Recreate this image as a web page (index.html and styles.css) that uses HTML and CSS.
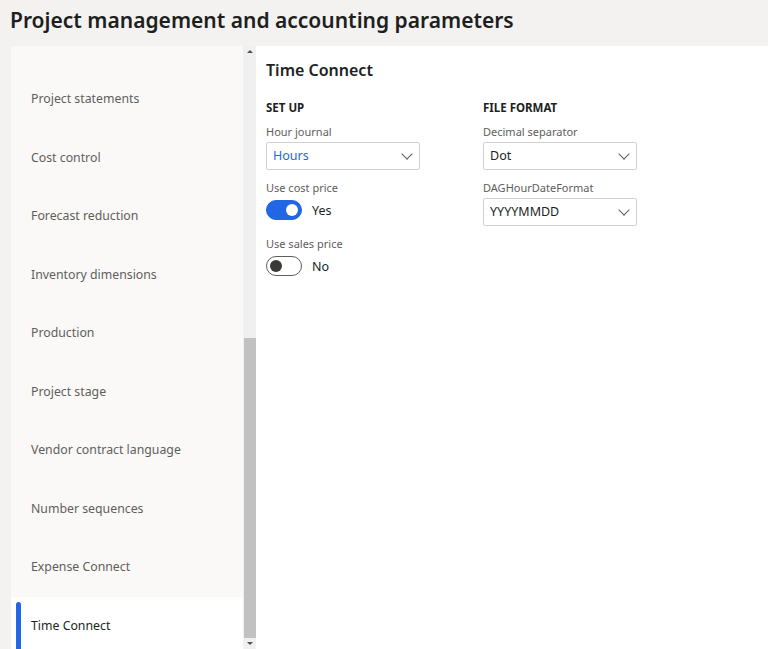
FILE: index.html
```html
<!DOCTYPE html>
<html>
  <head>
    <title>Project management and accounting parameters</title>
    <link rel="stylesheet" href="styles.css">
  </head>
  <body>
    <h1 class="page-title">Project management and accounting parameters</h1>
    <div class="layout">
      <div class="nav">
        <ul class="nav-list">
          <li class="nav-item">Project statements</li>
          <li class="nav-item">Cost control</li>
          <li class="nav-item">Forecast reduction</li>
          <li class="nav-item">Inventory dimensions</li>
          <li class="nav-item">Production</li>
          <li class="nav-item">Project stage</li>
          <li class="nav-item">Vendor contract language</li>
          <li class="nav-item">Number sequences</li>
          <li class="nav-item">Expense Connect</li>
          <li class="nav-item selected">Time Connect</li>
        </ul>
      </div>
      <div class="scrollbar">
        <div class="arrow up"></div>
        <div class="track"><div class="thumb"></div></div>
        <div class="arrow down"></div>
      </div>
      <div class="content">
        <h2 class="section-title">Time Connect</h2>
        <div class="columns">
          <div class="column">
            <h3 class="group-title">SET UP</h3>
            <div class="field">
              <div class="label">Hour journal</div>
              <div class="select link">Hours<span class="chevron"></span></div>
            </div>
            <div class="field toggle-field">
              <div class="label">Use cost price</div>
              <div class="toggle-row">
                <span class="toggle on"><span class="knob"></span></span>
                <span class="toggle-text">Yes</span>
              </div>
            </div>
            <div class="field toggle-field">
              <div class="label">Use sales price</div>
              <div class="toggle-row">
                <span class="toggle"><span class="knob"></span></span>
                <span class="toggle-text">No</span>
              </div>
            </div>
          </div>
          <div class="column">
            <h3 class="group-title">FILE FORMAT</h3>
            <div class="field">
              <div class="label">Decimal separator</div>
              <div class="select">Dot<span class="chevron"></span></div>
            </div>
            <div class="field">
              <div class="label">DAGHourDateFormat</div>
              <div class="select">YYYYMMDD<span class="chevron"></span></div>
            </div>
          </div>
        </div>
      </div>
    </div>
  </body>
</html>
```

FILE: styles.css
```css
/* page */
body {
  margin: 0;
  background-color: #f3f2f1;
  font-family: "Noto Sans", "Open Sans", sans-serif;
  color: #323130;
  height: 649px;
  overflow: hidden;
}

.page-title {
  margin: 0;
  padding: 6px 10px 0;
  height: 40px;
  font-size: 21px;
  font-weight: 600;
  line-height: 28px;
  color: #201f1e;
}

.layout {
  display: flex;
  padding-left: 11px;
  height: 603px;
}

/* left navigation */
.nav {
  width: 232px;
  background-color: #faf9f8;
  overflow: hidden;
}

.nav-list {
  list-style: none;
  margin: 0;
  padding: 24px 0 0;
}

.nav-item {
  position: relative;
  height: 58.5px;
  line-height: 58.5px;
  padding-left: 20px;
  font-size: 12.3px;
  color: #605e5c;
}

.nav-item.selected {
  background-color: #fff;
  color: #201f1e;
}

.nav-item.selected::before {
  content: "";
  position: absolute;
  left: 5px;
  top: 5px;
  width: 5px;
  height: 60px;
  border-radius: 3px;
  background-color: #2266e3;
}

/* scrollbar */
.scrollbar {
  width: 13px;
  display: flex;
  flex-direction: column;
  background-color: #f0f0f0;
}

.arrow {
  height: 12px;
  display: flex;
  justify-content: center;
  align-items: center;
}

.arrow::after {
  content: "";
  border-left: 3px solid transparent;
  border-right: 3px solid transparent;
}

.arrow.up::after {
  border-bottom: 3px solid #505050;
}

.arrow.down::after {
  border-top: 3px solid #505050;
}

.track {
  flex: 1;
}

.thumb {
  margin: 280px 0 0 1px;
  height: 300px;
  background-color: #c1c1c1;
}

/* content */
.content {
  flex: 1;
  background-color: #fff;
  padding: 12px 10px 0;
}

.section-title {
  margin: 0 0 18px;
  font-size: 16px;
  font-weight: 600;
  line-height: 24px;
  color: #201f1e;
}

.columns {
  display: grid;
  grid-template-columns: 154px 154px;
  column-gap: 63px;
}

.group-title {
  margin: 0 0 8px;
  font-size: 11.5px;
  font-weight: 700;
  line-height: 16px;
  color: #201f1e;
}

.field {
  margin-bottom: 10px;
}

.toggle-field {
  margin-bottom: 14px;
}

.label {
  font-size: 11px;
  line-height: 16px;
  color: #605e5c;
  margin-bottom: 2px;
}

.select {
  position: relative;
  box-sizing: border-box;
  height: 28px;
  line-height: 26px;
  border: 1px solid #d2d0ce;
  border-radius: 2px;
  padding-left: 6px;
  font-size: 12.5px;
  color: #201f1e;
}

.select.link {
  color: #2266e3;
}

.chevron {
  position: absolute;
  right: 8px;
  top: 7px;
  width: 7px;
  height: 7px;
  border-right: 1px solid #605e5c;
  border-bottom: 1px solid #605e5c;
  transform: rotate(45deg);
}

/* toggles */
.toggle-row {
  display: flex;
  align-items: center;
  height: 24px;
}

.toggle {
  box-sizing: border-box;
  display: flex;
  align-items: center;
  width: 36px;
  height: 20px;
  border: 1px solid #605e5c;
  border-radius: 10px;
  padding: 0 3px;
  background-color: #fff;
}

.toggle .knob {
  width: 12px;
  height: 12px;
  border-radius: 50%;
  background-color: #3b3a39;
}

.toggle.on {
  border-color: #2266e3;
  background-color: #2266e3;
  justify-content: flex-end;
}

.toggle.on .knob {
  background-color: #fff;
}

.toggle-text {
  margin-left: 10px;
  font-size: 12.5px;
  color: #201f1e;
}
```
